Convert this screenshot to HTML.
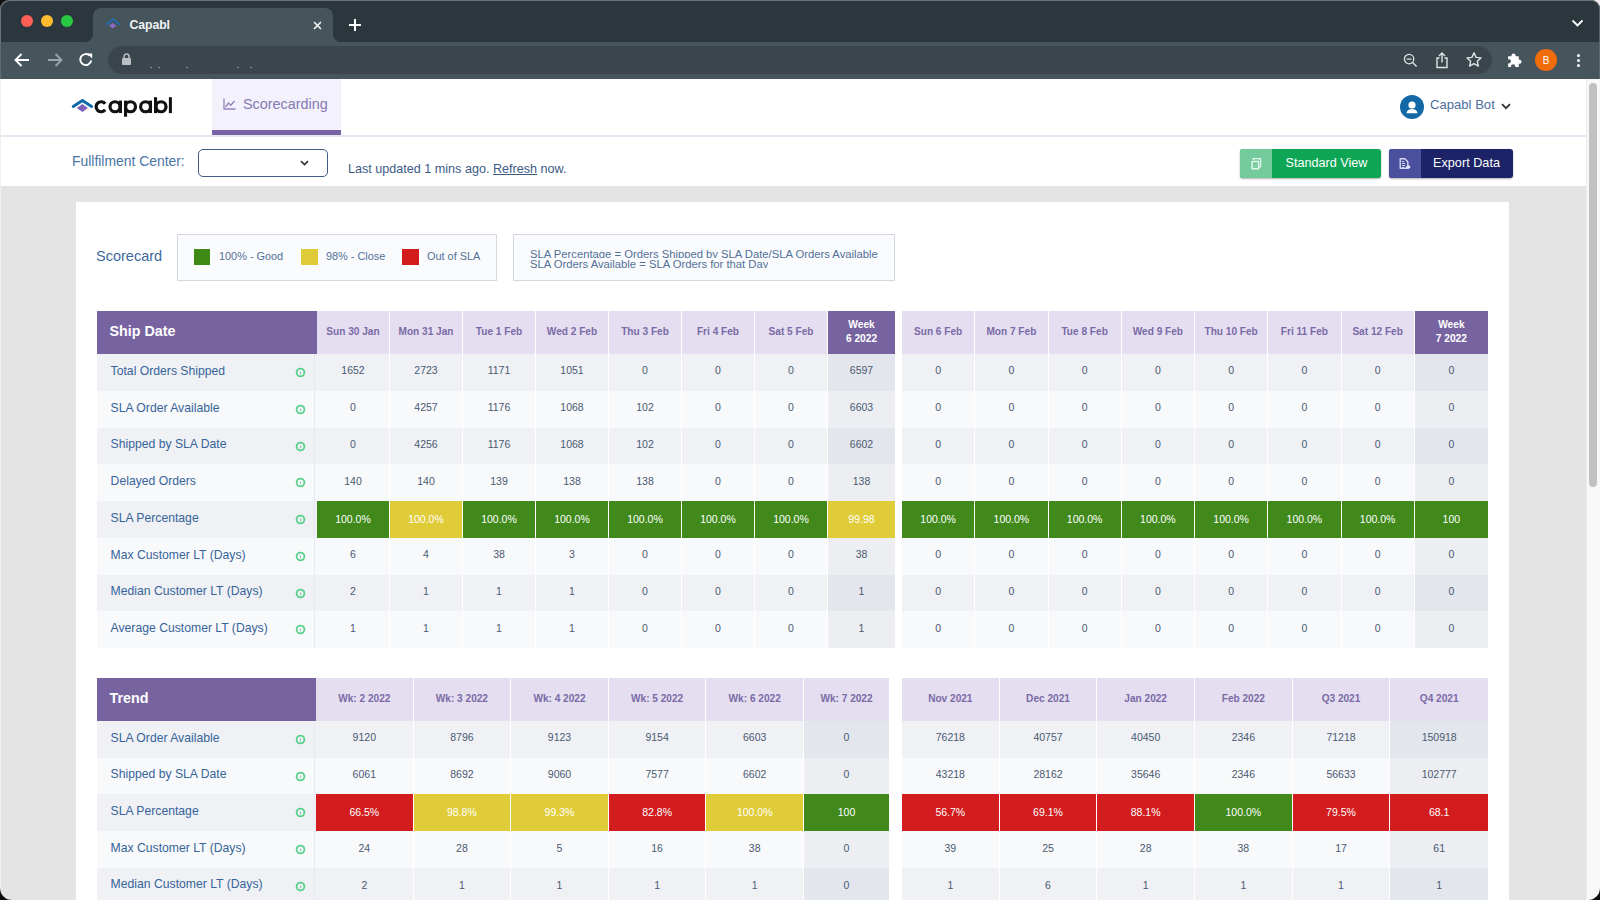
<!DOCTYPE html>
<html><head><meta charset="utf-8"><title>Capabl</title><style>
*{box-sizing:border-box;margin:0;padding:0}
html,body{width:1600px;height:900px;overflow:hidden;background:#fff;font-family:"Liberation Sans",sans-serif}
.a{position:absolute}
.t{position:absolute;white-space:nowrap;line-height:1}
</style></head>
<body>
<div class="a" style="left:0px;top:0px;width:1600px;height:79px;background:#111"></div><div class="a" style="left:1580px;top:0px;width:20px;height:20px;background:#eeeaee"></div><div class="a" style="left:0px;top:0px;width:1600px;height:42px;background:#2b373c;border-radius:9px 9px 0 0;box-shadow:inset 1px 1px 0 #67747a, inset -1px 0 0 #56636a"></div><div class="a" style="left:0px;top:42px;width:1600px;height:37px;background:#46555c;box-shadow:inset 1px 0 0 #5d6a70, inset -1px 0 0 #5d6a70"></div><div class="a" style="left:20.8px;top:14.8px;width:12.4px;height:12.4px;border-radius:50%;background:#fe5f57"></div><div class="a" style="left:40.8px;top:14.8px;width:12.4px;height:12.4px;border-radius:50%;background:#febc2e"></div><div class="a" style="left:60.8px;top:14.8px;width:12.4px;height:12.4px;border-radius:50%;background:#28c840"></div><div class="a" style="left:93px;top:8px;width:240px;height:34px;background:#46555c;border-radius:8px 8px 0 0"></div><div class="a" style="left:85px;top:34px;width:8px;height:8px;background:#46555c"></div><div class="a" style="left:77px;top:26px;width:16px;height:16px;background:#2b373c;border-bottom-right-radius:8px"></div><div class="a" style="left:333px;top:34px;width:8px;height:8px;background:#46555c"></div><div class="a" style="left:333px;top:26px;width:16px;height:16px;background:#2b373c;border-bottom-left-radius:8px"></div><svg class="a" style="left:104px;top:16px" width="18" height="14" viewBox="104 16 18 14"><path d="M106.8 24.2L113 19.2L119.2 24.2" stroke="#1f6db0" stroke-width="2" fill="none" stroke-linecap="round" stroke-linejoin="round"/><path d="M109 25.8L112.7 23L116.4 25.8L112.7 28.6Z" fill="#8a6cc4"/></svg><div class="t" style="left:129.5px;top:18.5px;font-size:12.3px;color:#f1f3f4;font-weight:700;letter-spacing:-0.1px;">Capabl</div><svg class="a" style="left:312.5px;top:20.5px" width="9" height="9" viewBox="0 0 9 9"><path d="M1 1L8 8M8 1L1 8" stroke="#f1f3f4" stroke-width="1.6"/></svg><svg class="a" style="left:348px;top:18px" width="14" height="14" viewBox="0 0 14 14"><path d="M7 1V13M1 7H13" stroke="#fff" stroke-width="2"/></svg><svg class="a" style="left:1571px;top:19px" width="13" height="9" viewBox="0 0 13 9"><path d="M1.5 1.5L6.5 6.5L11.5 1.5" stroke="#fff" stroke-width="1.8" fill="none"/></svg><svg class="a" style="left:13px;top:52px" width="18" height="16" viewBox="0 0 18 16"><path d="M16 8H3M8.5 2L2.5 8L8.5 14" stroke="#fff" stroke-width="1.9" fill="none"/></svg><svg class="a" style="left:46px;top:52px" width="18" height="16" viewBox="0 0 18 16"><path d="M2 8H15M9.5 2L15.5 8L9.5 14" stroke="#9aa4aa" stroke-width="1.9" fill="none"/></svg><svg class="a" style="left:78px;top:52px" width="16" height="16" viewBox="0 0 16 16"><path d="M13.2 8.5A5.5 5.5 0 1 1 11.6 3.6" stroke="#fff" stroke-width="1.9" fill="none"/><path d="M9.2 1.6H14.2V6.6Z" fill="#fff"/></svg><div class="a" style="left:108px;top:46px;width:1384px;height:28px;background:#3a464c;border-radius:14px"></div><svg class="a" style="left:122px;top:53px" width="9" height="12" viewBox="0 0 9 12"><rect x="0" y="5" width="9" height="7" rx="1" fill="#b9bfc4"/><path d="M2 5.5V3.5A2.5 2.5 0 0 1 7 3.5V5.5" stroke="#b9bfc4" stroke-width="1.5" fill="none"/></svg><div class="a" style="left:150px;top:67px;width:2px;height:1px;background:#8a949a"></div><div class="a" style="left:158px;top:67px;width:2px;height:1px;background:#8a949a"></div><div class="a" style="left:186px;top:67px;width:2px;height:1px;background:#8a949a"></div><div class="a" style="left:237px;top:67px;width:2px;height:1px;background:#8a949a"></div><div class="a" style="left:250px;top:67px;width:2px;height:1px;background:#8a949a"></div><svg class="a" style="left:1402.5px;top:53px" width="15" height="15" viewBox="0 0 16 16"><circle cx="6.5" cy="6.5" r="5" stroke="#dfe3e6" stroke-width="1.4" fill="none"/><path d="M4 6.5H9M10.2 10.2L14.5 14.5" stroke="#dfe3e6" stroke-width="1.5"/></svg><svg class="a" style="left:1435px;top:51px" width="14" height="18" viewBox="0 0 14 18"><path d="M4.5 7H2V16.5H12V7H9.5" stroke="#dfe3e6" stroke-width="1.4" fill="none"/><path d="M7 11.5V2M4 5L7 2L10 5" stroke="#dfe3e6" stroke-width="1.4" fill="none"/></svg><svg class="a" style="left:1465px;top:51px" width="18" height="18" viewBox="0 0 18 18"><path d="M9 1.8L11.1 6.4L16 6.9L12.3 10.2L13.4 15.1L9 12.6L4.6 15.1L5.7 10.2L2 6.9L6.9 6.4Z" stroke="#dfe3e6" stroke-width="1.4" fill="none" stroke-linejoin="round"/></svg><svg class="a" style="left:1505.5px;top:51px" width="17" height="17" viewBox="0 0 16 16"><path d="M2 5H5.2A2 2 0 1 1 9 5H12V8.2A2 2 0 1 1 12 12V15H8.6A2 2 0 1 0 4.8 15H2V11.6A2 2 0 1 0 2 7.8Z" fill="#fff"/></svg><div class="a" style="left:1535px;top:49px;width:22px;height:22px;border-radius:50%;background:#f06c0a"></div><div class="a" style="left:1535px;top:50px;width:22px;height:22px;line-height:22px;text-align:center;font-size:10px;color:#fff">B</div><div class="a" style="left:1576.6px;top:54.0px;width:3.2px;height:3.2px;border-radius:50%;background:#fff"></div><div class="a" style="left:1576.6px;top:58.8px;width:3.2px;height:3.2px;border-radius:50%;background:#fff"></div><div class="a" style="left:1576.6px;top:63.699999999999996px;width:3.2px;height:3.2px;border-radius:50%;background:#fff"></div><div class="a" style="left:0px;top:79px;width:1586px;height:107px;background:#fff"></div><svg class="a" style="left:66px;top:92px" width="110" height="28" viewBox="66 92 110 28"><path d="M73.25 106.5L82.4 100.6L91.6 106.5" stroke="#0f69a8" stroke-width="3" fill="none" stroke-linecap="round" stroke-linejoin="round"/><path d="M76.8 108L82.4 104L87.9 108L82.4 111.9Z" fill="#7d63b8"/><g stroke="#111" stroke-width="3.2" fill="none"><path d="M105.15 103.81A5 5 0 1 0 105.15 109.69"/><circle cx="115.0" cy="106.75" r="5"/><circle cx="130.5" cy="106.75" r="5"/><circle cx="145.6" cy="106.75" r="5"/><circle cx="161.0" cy="106.75" r="5"/></g><g fill="#111"><rect x="118.9" y="100.6" width="3.1" height="12.4"/><rect x="124.0" y="100.6" width="3.1" height="16.1"/><rect x="148.9" y="100.6" width="3.1" height="12.4"/><rect x="154.0" y="97.2" width="3.1" height="15.9"/><rect x="168.9" y="97.2" width="3.0" height="15.9"/></g></svg><div class="a" style="left:212px;top:79px;width:129px;height:56px;background:#f3f1fb"></div><div class="a" style="left:212px;top:130px;width:129px;height:5px;background:#7763a4"></div><svg class="a" style="left:223px;top:98px" width="13" height="12" viewBox="0 0 13 12"><path d="M1 0.5V11H12.5" stroke="#9283bd" stroke-width="1.3" fill="none"/><path d="M2.5 9L5.5 5L7.8 7.2L11.5 3" stroke="#9283bd" stroke-width="1.3" fill="none"/></svg><div class="t" style="left:243px;top:97px;font-size:14.4px;color:#8678b3;font-weight:400;">Scorecarding</div><div class="a" style="left:0px;top:135px;width:1586px;height:2px;background:#e7e5f1"></div><div class="a" style="left:1400px;top:95px;width:24px;height:24px;border-radius:50%;background:#1368a5"></div><svg class="a" style="left:1400px;top:95px" width="24" height="24" viewBox="0 0 24 24"><circle cx="12" cy="10" r="3.6" fill="#fff"/><path d="M6.5 18.2C7 15.2 9 14 12 14C15 14 17 15.2 17.5 18.2Z" fill="#fff"/></svg><div class="t" style="left:1430px;top:98px;font-size:13.1px;color:#4d6c9b;font-weight:400;">Capabl Bot</div><svg class="a" style="left:1501px;top:103px" width="10" height="7" viewBox="0 0 10 7"><path d="M1 1.2L5 5.2L9 1.2" stroke="#333" stroke-width="1.8" fill="none"/></svg><div class="t" style="left:72px;top:154.5px;font-size:13.9px;color:#4a73a6;font-weight:400;">Fullfilment Center:</div><div class="a" style="left:198px;top:149px;width:130px;height:28px;border:1px solid #3f5b86;border-radius:5px;background:#fff"></div><svg class="a" style="left:299.5px;top:160px" width="9" height="6" viewBox="0 0 9 6"><path d="M1 1.2L4.5 4.6L8 1.2" stroke="#333" stroke-width="1.7" fill="none"/></svg><div class="t" style="left:348px;top:163.3px;font-size:12.6px;color:#3d5a85;font-weight:400;">Last updated 1 mins ago. <span style="text-decoration:underline">Refresh</span> now.</div><div class="a" style="left:1240px;top:149px;width:141px;height:29px;border-radius:3px;background:#0ea655;box-shadow:0 1px 2px rgba(0,0,0,.3);overflow:hidden"></div><div class="a" style="left:1240px;top:149px;width:32px;height:29px;border-radius:3px 0 0 3px;background:#73cb9c"></div><svg class="a" style="left:1248px;top:155px" width="16" height="17" viewBox="1248 155 16 17"><path d="M1252 161.5H1258.5V168.7H1252Z" stroke="#e4f6ec" stroke-width="1.5" fill="none" stroke-linejoin="round"/><path d="M1253.3 160V158.6H1260.6V166.5L1259 167.6" stroke="#e4f6ec" stroke-width="1.4" fill="none" stroke-linejoin="round"/><rect x="1253" y="164.5" width="4.5" height="3.2" fill="#7fcfa5"/></svg><div class="t" style="left:1285.5px;top:156.5px;font-size:12.65px;color:#fff;font-weight:400;">Standard View</div><div class="a" style="left:1389px;top:149px;width:124px;height:29px;border-radius:3px;background:#1c2366;box-shadow:0 1px 2px rgba(0,0,0,.3)"></div><div class="a" style="left:1389px;top:149px;width:32px;height:29px;border-radius:3px 0 0 3px;background:#4b509e"></div><svg class="a" style="left:1396px;top:155px" width="16" height="17" viewBox="1396 155 16 17"><path d="M1400.2 158.7H1404.8L1407.8 161.8V168.3H1400.2Z" stroke="#d3d6f3" stroke-width="1.4" fill="none" stroke-linejoin="round"/><path d="M1402 161.5H1404M1402 163.5H1405M1402 165.5H1405M1402 167.5H1404" stroke="#d3d6f3" stroke-width="1.1"/><path d="M1406 167H1409.6M1408.2 165.4L1409.8 167L1408.2 168.6" stroke="#e6e8f8" stroke-width="1.3" fill="none"/></svg><div class="t" style="left:1433px;top:156.5px;font-size:12.7px;color:#fff;font-weight:400;">Export Data</div><div class="a" style="left:0px;top:186px;width:1586px;height:714px;background:#e4e4e4"></div><div class="a" style="left:1586px;top:79px;width:14px;height:821px;background:#f8f8f8;border-left:1px solid #ececec"></div><div class="a" style="left:1589px;top:83px;width:8px;height:404px;background:#c1c1c1;border-radius:4px"></div><div class="a" style="left:76px;top:202px;width:1433px;height:698px;background:#fff"></div><div class="t" style="left:96px;top:249px;font-size:14.5px;color:#3e6a9d;font-weight:400;">Scorecard</div><div class="a" style="left:177px;top:234px;width:320px;height:47px;border:1px solid #d5d8dd;background:#fafbfc"></div><div class="a" style="left:194px;top:249px;width:16px;height:16px;background:#3f8a14"></div><div class="t" style="left:219px;top:251px;font-size:10.9px;color:#52709a;font-weight:400;">100% - Good</div><div class="a" style="left:301px;top:249px;width:17px;height:16px;background:#dfcb38"></div><div class="t" style="left:326px;top:251px;font-size:10.9px;color:#52709a;font-weight:400;">98% - Close</div><div class="a" style="left:402px;top:249px;width:17px;height:16px;background:#d21c1c"></div><div class="t" style="left:427px;top:251px;font-size:10.9px;color:#52709a;font-weight:400;">Out of SLA</div><div class="a" style="left:513px;top:234px;width:382px;height:47px;border:1px solid #d5d8dd;background:#fafbfc"></div><div class="a" style="left:530px;top:248px;height:10px;overflow:hidden;font-size:11.25px;line-height:12px;color:#52709a;white-space:nowrap">SLA Percentage = Orders Shipped by SLA Date/SLA Orders Available</div><div class="a" style="left:530px;top:258px;height:10px;overflow:hidden;font-size:11.25px;line-height:12px;color:#52709a;white-space:nowrap">SLA Orders Available = SLA Orders for that Day</div><div class="a" style="left:97px;top:311px;width:220px;height:43px;background:#7763a0"></div><div class="t" style="left:109.5px;top:324.0px;font-size:14.3px;color:#fff;font-weight:700;">Ship Date</div><div class="a" style="left:97px;top:354.0px;width:220px;height:36.75px;background:#eff1f5"></div><div class="t" style="left:110.6px;top:364.875px;font-size:12.2px;color:#37649a;font-weight:400;">Total Orders Shipped</div><svg class="a" style="left:295.1px;top:367.175px" width="11" height="11" viewBox="0 0 11 11"><circle cx="5.5" cy="5.5" r="3.9" stroke="#5ad08c" stroke-width="1.8" fill="none"/><path d="M5.5 4.4V7.4" stroke="#6cc598" stroke-width="0.9"/></svg><div class="a" style="left:97px;top:390.75px;width:220px;height:36.75px;background:#f8f9fb"></div><div class="t" style="left:110.6px;top:401.625px;font-size:12.2px;color:#37649a;font-weight:400;">SLA Order Available</div><svg class="a" style="left:295.1px;top:403.925px" width="11" height="11" viewBox="0 0 11 11"><circle cx="5.5" cy="5.5" r="3.9" stroke="#5ad08c" stroke-width="1.8" fill="none"/><path d="M5.5 4.4V7.4" stroke="#6cc598" stroke-width="0.9"/></svg><div class="a" style="left:97px;top:427.5px;width:220px;height:36.75px;background:#eff1f5"></div><div class="t" style="left:110.6px;top:438.375px;font-size:12.2px;color:#37649a;font-weight:400;">Shipped by SLA Date</div><svg class="a" style="left:295.1px;top:440.675px" width="11" height="11" viewBox="0 0 11 11"><circle cx="5.5" cy="5.5" r="3.9" stroke="#5ad08c" stroke-width="1.8" fill="none"/><path d="M5.5 4.4V7.4" stroke="#6cc598" stroke-width="0.9"/></svg><div class="a" style="left:97px;top:464.25px;width:220px;height:36.75px;background:#f8f9fb"></div><div class="t" style="left:110.6px;top:475.125px;font-size:12.2px;color:#37649a;font-weight:400;">Delayed Orders</div><svg class="a" style="left:295.1px;top:477.425px" width="11" height="11" viewBox="0 0 11 11"><circle cx="5.5" cy="5.5" r="3.9" stroke="#5ad08c" stroke-width="1.8" fill="none"/><path d="M5.5 4.4V7.4" stroke="#6cc598" stroke-width="0.9"/></svg><div class="a" style="left:97px;top:501.0px;width:220px;height:36.75px;background:#eff1f5"></div><div class="t" style="left:110.6px;top:511.875px;font-size:12.2px;color:#37649a;font-weight:400;">SLA Percentage</div><svg class="a" style="left:295.1px;top:514.175px" width="11" height="11" viewBox="0 0 11 11"><circle cx="5.5" cy="5.5" r="3.9" stroke="#5ad08c" stroke-width="1.8" fill="none"/><path d="M5.5 4.4V7.4" stroke="#6cc598" stroke-width="0.9"/></svg><div class="a" style="left:97px;top:537.75px;width:220px;height:36.75px;background:#f8f9fb"></div><div class="t" style="left:110.6px;top:548.625px;font-size:12.2px;color:#37649a;font-weight:400;">Max Customer LT (Days)</div><svg class="a" style="left:295.1px;top:550.925px" width="11" height="11" viewBox="0 0 11 11"><circle cx="5.5" cy="5.5" r="3.9" stroke="#5ad08c" stroke-width="1.8" fill="none"/><path d="M5.5 4.4V7.4" stroke="#6cc598" stroke-width="0.9"/></svg><div class="a" style="left:97px;top:574.5px;width:220px;height:36.75px;background:#eff1f5"></div><div class="t" style="left:110.6px;top:585.375px;font-size:12.2px;color:#37649a;font-weight:400;">Median Customer LT (Days)</div><svg class="a" style="left:295.1px;top:587.675px" width="11" height="11" viewBox="0 0 11 11"><circle cx="5.5" cy="5.5" r="3.9" stroke="#5ad08c" stroke-width="1.8" fill="none"/><path d="M5.5 4.4V7.4" stroke="#6cc598" stroke-width="0.9"/></svg><div class="a" style="left:97px;top:611.25px;width:220px;height:36.75px;background:#f8f9fb"></div><div class="t" style="left:110.6px;top:622.125px;font-size:12.2px;color:#37649a;font-weight:400;">Average Customer LT (Days)</div><svg class="a" style="left:295.1px;top:624.425px" width="11" height="11" viewBox="0 0 11 11"><circle cx="5.5" cy="5.5" r="3.9" stroke="#5ad08c" stroke-width="1.8" fill="none"/><path d="M5.5 4.4V7.4" stroke="#6cc598" stroke-width="0.9"/></svg><div class="a" style="left:314px;top:354.0px;width:1px;height:294.0px;background:#e4e9f8"></div><div class="a" style="left:317px;top:311px;width:72px;height:43px;background:#e4def0"></div><div class="a" style="left:317px;top:309.5px;width:72px;height:43px;line-height:43px;text-align:center;font-size:10.1px;font-weight:700;color:#7a6aa6;white-space:nowrap">Sun 30 Jan</div><div class="a" style="left:317px;top:354.0px;width:72px;height:36.75px;background:#eff1f5"></div><div class="a" style="left:317px;top:354.0px;width:72px;height:36.75px;line-height:33.75px;text-align:center;font-size:10.5px;color:#4a5a72;white-space:nowrap">1652</div><div class="a" style="left:317px;top:390.75px;width:72px;height:36.75px;background:#f8f9fb"></div><div class="a" style="left:317px;top:390.89px;width:72px;height:36.75px;line-height:33.75px;text-align:center;font-size:10.5px;color:#4a5a72;white-space:nowrap">0</div><div class="a" style="left:317px;top:427.5px;width:72px;height:36.75px;background:#eff1f5"></div><div class="a" style="left:317px;top:427.78px;width:72px;height:36.75px;line-height:33.75px;text-align:center;font-size:10.5px;color:#4a5a72;white-space:nowrap">0</div><div class="a" style="left:317px;top:464.25px;width:72px;height:36.75px;background:#f8f9fb"></div><div class="a" style="left:317px;top:464.67px;width:72px;height:36.75px;line-height:33.75px;text-align:center;font-size:10.5px;color:#4a5a72;white-space:nowrap">140</div><div class="a" style="left:317px;top:501.0px;width:72px;height:36.75px;background:#40891a"></div><div class="a" style="left:317px;top:501.56px;width:72px;height:36.75px;line-height:34.75px;text-align:center;font-size:10.5px;color:#fff;white-space:nowrap">100.0%</div><div class="a" style="left:317px;top:537.75px;width:72px;height:36.75px;background:#f8f9fb"></div><div class="a" style="left:317px;top:538.45px;width:72px;height:36.75px;line-height:33.75px;text-align:center;font-size:10.5px;color:#4a5a72;white-space:nowrap">6</div><div class="a" style="left:317px;top:574.5px;width:72px;height:36.75px;background:#eff1f5"></div><div class="a" style="left:317px;top:575.34px;width:72px;height:36.75px;line-height:33.75px;text-align:center;font-size:10.5px;color:#4a5a72;white-space:nowrap">2</div><div class="a" style="left:317px;top:611.25px;width:72px;height:36.75px;background:#f8f9fb"></div><div class="a" style="left:317px;top:612.23px;width:72px;height:36.75px;line-height:33.75px;text-align:center;font-size:10.5px;color:#4a5a72;white-space:nowrap">1</div><div class="a" style="left:390px;top:311px;width:72px;height:43px;background:#e4def0"></div><div class="a" style="left:390px;top:309.5px;width:72px;height:43px;line-height:43px;text-align:center;font-size:10.1px;font-weight:700;color:#7a6aa6;white-space:nowrap">Mon 31 Jan</div><div class="a" style="left:390px;top:354.0px;width:72px;height:36.75px;background:#eff1f5"></div><div class="a" style="left:390px;top:354.0px;width:72px;height:36.75px;line-height:33.75px;text-align:center;font-size:10.5px;color:#4a5a72;white-space:nowrap">2723</div><div class="a" style="left:390px;top:390.75px;width:72px;height:36.75px;background:#f8f9fb"></div><div class="a" style="left:390px;top:390.89px;width:72px;height:36.75px;line-height:33.75px;text-align:center;font-size:10.5px;color:#4a5a72;white-space:nowrap">4257</div><div class="a" style="left:390px;top:427.5px;width:72px;height:36.75px;background:#eff1f5"></div><div class="a" style="left:390px;top:427.78px;width:72px;height:36.75px;line-height:33.75px;text-align:center;font-size:10.5px;color:#4a5a72;white-space:nowrap">4256</div><div class="a" style="left:390px;top:464.25px;width:72px;height:36.75px;background:#f8f9fb"></div><div class="a" style="left:390px;top:464.67px;width:72px;height:36.75px;line-height:33.75px;text-align:center;font-size:10.5px;color:#4a5a72;white-space:nowrap">140</div><div class="a" style="left:390px;top:501.0px;width:72px;height:36.75px;background:#dfcc38"></div><div class="a" style="left:390px;top:501.56px;width:72px;height:36.75px;line-height:34.75px;text-align:center;font-size:10.5px;color:#fff;white-space:nowrap">100.0%</div><div class="a" style="left:390px;top:537.75px;width:72px;height:36.75px;background:#f8f9fb"></div><div class="a" style="left:390px;top:538.45px;width:72px;height:36.75px;line-height:33.75px;text-align:center;font-size:10.5px;color:#4a5a72;white-space:nowrap">4</div><div class="a" style="left:390px;top:574.5px;width:72px;height:36.75px;background:#eff1f5"></div><div class="a" style="left:390px;top:575.34px;width:72px;height:36.75px;line-height:33.75px;text-align:center;font-size:10.5px;color:#4a5a72;white-space:nowrap">1</div><div class="a" style="left:390px;top:611.25px;width:72px;height:36.75px;background:#f8f9fb"></div><div class="a" style="left:390px;top:612.23px;width:72px;height:36.75px;line-height:33.75px;text-align:center;font-size:10.5px;color:#4a5a72;white-space:nowrap">1</div><div class="a" style="left:463px;top:311px;width:72px;height:43px;background:#e4def0"></div><div class="a" style="left:463px;top:309.5px;width:72px;height:43px;line-height:43px;text-align:center;font-size:10.1px;font-weight:700;color:#7a6aa6;white-space:nowrap">Tue 1 Feb</div><div class="a" style="left:463px;top:354.0px;width:72px;height:36.75px;background:#eff1f5"></div><div class="a" style="left:463px;top:354.0px;width:72px;height:36.75px;line-height:33.75px;text-align:center;font-size:10.5px;color:#4a5a72;white-space:nowrap">1171</div><div class="a" style="left:463px;top:390.75px;width:72px;height:36.75px;background:#f8f9fb"></div><div class="a" style="left:463px;top:390.89px;width:72px;height:36.75px;line-height:33.75px;text-align:center;font-size:10.5px;color:#4a5a72;white-space:nowrap">1176</div><div class="a" style="left:463px;top:427.5px;width:72px;height:36.75px;background:#eff1f5"></div><div class="a" style="left:463px;top:427.78px;width:72px;height:36.75px;line-height:33.75px;text-align:center;font-size:10.5px;color:#4a5a72;white-space:nowrap">1176</div><div class="a" style="left:463px;top:464.25px;width:72px;height:36.75px;background:#f8f9fb"></div><div class="a" style="left:463px;top:464.67px;width:72px;height:36.75px;line-height:33.75px;text-align:center;font-size:10.5px;color:#4a5a72;white-space:nowrap">139</div><div class="a" style="left:463px;top:501.0px;width:72px;height:36.75px;background:#40891a"></div><div class="a" style="left:463px;top:501.56px;width:72px;height:36.75px;line-height:34.75px;text-align:center;font-size:10.5px;color:#fff;white-space:nowrap">100.0%</div><div class="a" style="left:463px;top:537.75px;width:72px;height:36.75px;background:#f8f9fb"></div><div class="a" style="left:463px;top:538.45px;width:72px;height:36.75px;line-height:33.75px;text-align:center;font-size:10.5px;color:#4a5a72;white-space:nowrap">38</div><div class="a" style="left:463px;top:574.5px;width:72px;height:36.75px;background:#eff1f5"></div><div class="a" style="left:463px;top:575.34px;width:72px;height:36.75px;line-height:33.75px;text-align:center;font-size:10.5px;color:#4a5a72;white-space:nowrap">1</div><div class="a" style="left:463px;top:611.25px;width:72px;height:36.75px;background:#f8f9fb"></div><div class="a" style="left:463px;top:612.23px;width:72px;height:36.75px;line-height:33.75px;text-align:center;font-size:10.5px;color:#4a5a72;white-space:nowrap">1</div><div class="a" style="left:536px;top:311px;width:72px;height:43px;background:#e4def0"></div><div class="a" style="left:536px;top:309.5px;width:72px;height:43px;line-height:43px;text-align:center;font-size:10.1px;font-weight:700;color:#7a6aa6;white-space:nowrap">Wed 2 Feb</div><div class="a" style="left:536px;top:354.0px;width:72px;height:36.75px;background:#eff1f5"></div><div class="a" style="left:536px;top:354.0px;width:72px;height:36.75px;line-height:33.75px;text-align:center;font-size:10.5px;color:#4a5a72;white-space:nowrap">1051</div><div class="a" style="left:536px;top:390.75px;width:72px;height:36.75px;background:#f8f9fb"></div><div class="a" style="left:536px;top:390.89px;width:72px;height:36.75px;line-height:33.75px;text-align:center;font-size:10.5px;color:#4a5a72;white-space:nowrap">1068</div><div class="a" style="left:536px;top:427.5px;width:72px;height:36.75px;background:#eff1f5"></div><div class="a" style="left:536px;top:427.78px;width:72px;height:36.75px;line-height:33.75px;text-align:center;font-size:10.5px;color:#4a5a72;white-space:nowrap">1068</div><div class="a" style="left:536px;top:464.25px;width:72px;height:36.75px;background:#f8f9fb"></div><div class="a" style="left:536px;top:464.67px;width:72px;height:36.75px;line-height:33.75px;text-align:center;font-size:10.5px;color:#4a5a72;white-space:nowrap">138</div><div class="a" style="left:536px;top:501.0px;width:72px;height:36.75px;background:#40891a"></div><div class="a" style="left:536px;top:501.56px;width:72px;height:36.75px;line-height:34.75px;text-align:center;font-size:10.5px;color:#fff;white-space:nowrap">100.0%</div><div class="a" style="left:536px;top:537.75px;width:72px;height:36.75px;background:#f8f9fb"></div><div class="a" style="left:536px;top:538.45px;width:72px;height:36.75px;line-height:33.75px;text-align:center;font-size:10.5px;color:#4a5a72;white-space:nowrap">3</div><div class="a" style="left:536px;top:574.5px;width:72px;height:36.75px;background:#eff1f5"></div><div class="a" style="left:536px;top:575.34px;width:72px;height:36.75px;line-height:33.75px;text-align:center;font-size:10.5px;color:#4a5a72;white-space:nowrap">1</div><div class="a" style="left:536px;top:611.25px;width:72px;height:36.75px;background:#f8f9fb"></div><div class="a" style="left:536px;top:612.23px;width:72px;height:36.75px;line-height:33.75px;text-align:center;font-size:10.5px;color:#4a5a72;white-space:nowrap">1</div><div class="a" style="left:609px;top:311px;width:72px;height:43px;background:#e4def0"></div><div class="a" style="left:609px;top:309.5px;width:72px;height:43px;line-height:43px;text-align:center;font-size:10.1px;font-weight:700;color:#7a6aa6;white-space:nowrap">Thu 3 Feb</div><div class="a" style="left:609px;top:354.0px;width:72px;height:36.75px;background:#eff1f5"></div><div class="a" style="left:609px;top:354.0px;width:72px;height:36.75px;line-height:33.75px;text-align:center;font-size:10.5px;color:#4a5a72;white-space:nowrap">0</div><div class="a" style="left:609px;top:390.75px;width:72px;height:36.75px;background:#f8f9fb"></div><div class="a" style="left:609px;top:390.89px;width:72px;height:36.75px;line-height:33.75px;text-align:center;font-size:10.5px;color:#4a5a72;white-space:nowrap">102</div><div class="a" style="left:609px;top:427.5px;width:72px;height:36.75px;background:#eff1f5"></div><div class="a" style="left:609px;top:427.78px;width:72px;height:36.75px;line-height:33.75px;text-align:center;font-size:10.5px;color:#4a5a72;white-space:nowrap">102</div><div class="a" style="left:609px;top:464.25px;width:72px;height:36.75px;background:#f8f9fb"></div><div class="a" style="left:609px;top:464.67px;width:72px;height:36.75px;line-height:33.75px;text-align:center;font-size:10.5px;color:#4a5a72;white-space:nowrap">138</div><div class="a" style="left:609px;top:501.0px;width:72px;height:36.75px;background:#40891a"></div><div class="a" style="left:609px;top:501.56px;width:72px;height:36.75px;line-height:34.75px;text-align:center;font-size:10.5px;color:#fff;white-space:nowrap">100.0%</div><div class="a" style="left:609px;top:537.75px;width:72px;height:36.75px;background:#f8f9fb"></div><div class="a" style="left:609px;top:538.45px;width:72px;height:36.75px;line-height:33.75px;text-align:center;font-size:10.5px;color:#4a5a72;white-space:nowrap">0</div><div class="a" style="left:609px;top:574.5px;width:72px;height:36.75px;background:#eff1f5"></div><div class="a" style="left:609px;top:575.34px;width:72px;height:36.75px;line-height:33.75px;text-align:center;font-size:10.5px;color:#4a5a72;white-space:nowrap">0</div><div class="a" style="left:609px;top:611.25px;width:72px;height:36.75px;background:#f8f9fb"></div><div class="a" style="left:609px;top:612.23px;width:72px;height:36.75px;line-height:33.75px;text-align:center;font-size:10.5px;color:#4a5a72;white-space:nowrap">0</div><div class="a" style="left:682px;top:311px;width:72px;height:43px;background:#e4def0"></div><div class="a" style="left:682px;top:309.5px;width:72px;height:43px;line-height:43px;text-align:center;font-size:10.1px;font-weight:700;color:#7a6aa6;white-space:nowrap">Fri 4 Feb</div><div class="a" style="left:682px;top:354.0px;width:72px;height:36.75px;background:#eff1f5"></div><div class="a" style="left:682px;top:354.0px;width:72px;height:36.75px;line-height:33.75px;text-align:center;font-size:10.5px;color:#4a5a72;white-space:nowrap">0</div><div class="a" style="left:682px;top:390.75px;width:72px;height:36.75px;background:#f8f9fb"></div><div class="a" style="left:682px;top:390.89px;width:72px;height:36.75px;line-height:33.75px;text-align:center;font-size:10.5px;color:#4a5a72;white-space:nowrap">0</div><div class="a" style="left:682px;top:427.5px;width:72px;height:36.75px;background:#eff1f5"></div><div class="a" style="left:682px;top:427.78px;width:72px;height:36.75px;line-height:33.75px;text-align:center;font-size:10.5px;color:#4a5a72;white-space:nowrap">0</div><div class="a" style="left:682px;top:464.25px;width:72px;height:36.75px;background:#f8f9fb"></div><div class="a" style="left:682px;top:464.67px;width:72px;height:36.75px;line-height:33.75px;text-align:center;font-size:10.5px;color:#4a5a72;white-space:nowrap">0</div><div class="a" style="left:682px;top:501.0px;width:72px;height:36.75px;background:#40891a"></div><div class="a" style="left:682px;top:501.56px;width:72px;height:36.75px;line-height:34.75px;text-align:center;font-size:10.5px;color:#fff;white-space:nowrap">100.0%</div><div class="a" style="left:682px;top:537.75px;width:72px;height:36.75px;background:#f8f9fb"></div><div class="a" style="left:682px;top:538.45px;width:72px;height:36.75px;line-height:33.75px;text-align:center;font-size:10.5px;color:#4a5a72;white-space:nowrap">0</div><div class="a" style="left:682px;top:574.5px;width:72px;height:36.75px;background:#eff1f5"></div><div class="a" style="left:682px;top:575.34px;width:72px;height:36.75px;line-height:33.75px;text-align:center;font-size:10.5px;color:#4a5a72;white-space:nowrap">0</div><div class="a" style="left:682px;top:611.25px;width:72px;height:36.75px;background:#f8f9fb"></div><div class="a" style="left:682px;top:612.23px;width:72px;height:36.75px;line-height:33.75px;text-align:center;font-size:10.5px;color:#4a5a72;white-space:nowrap">0</div><div class="a" style="left:755px;top:311px;width:72px;height:43px;background:#e4def0"></div><div class="a" style="left:755px;top:309.5px;width:72px;height:43px;line-height:43px;text-align:center;font-size:10.1px;font-weight:700;color:#7a6aa6;white-space:nowrap">Sat 5 Feb</div><div class="a" style="left:755px;top:354.0px;width:72px;height:36.75px;background:#eff1f5"></div><div class="a" style="left:755px;top:354.0px;width:72px;height:36.75px;line-height:33.75px;text-align:center;font-size:10.5px;color:#4a5a72;white-space:nowrap">0</div><div class="a" style="left:755px;top:390.75px;width:72px;height:36.75px;background:#f8f9fb"></div><div class="a" style="left:755px;top:390.89px;width:72px;height:36.75px;line-height:33.75px;text-align:center;font-size:10.5px;color:#4a5a72;white-space:nowrap">0</div><div class="a" style="left:755px;top:427.5px;width:72px;height:36.75px;background:#eff1f5"></div><div class="a" style="left:755px;top:427.78px;width:72px;height:36.75px;line-height:33.75px;text-align:center;font-size:10.5px;color:#4a5a72;white-space:nowrap">0</div><div class="a" style="left:755px;top:464.25px;width:72px;height:36.75px;background:#f8f9fb"></div><div class="a" style="left:755px;top:464.67px;width:72px;height:36.75px;line-height:33.75px;text-align:center;font-size:10.5px;color:#4a5a72;white-space:nowrap">0</div><div class="a" style="left:755px;top:501.0px;width:72px;height:36.75px;background:#40891a"></div><div class="a" style="left:755px;top:501.56px;width:72px;height:36.75px;line-height:34.75px;text-align:center;font-size:10.5px;color:#fff;white-space:nowrap">100.0%</div><div class="a" style="left:755px;top:537.75px;width:72px;height:36.75px;background:#f8f9fb"></div><div class="a" style="left:755px;top:538.45px;width:72px;height:36.75px;line-height:33.75px;text-align:center;font-size:10.5px;color:#4a5a72;white-space:nowrap">0</div><div class="a" style="left:755px;top:574.5px;width:72px;height:36.75px;background:#eff1f5"></div><div class="a" style="left:755px;top:575.34px;width:72px;height:36.75px;line-height:33.75px;text-align:center;font-size:10.5px;color:#4a5a72;white-space:nowrap">0</div><div class="a" style="left:755px;top:611.25px;width:72px;height:36.75px;background:#f8f9fb"></div><div class="a" style="left:755px;top:612.23px;width:72px;height:36.75px;line-height:33.75px;text-align:center;font-size:10.5px;color:#4a5a72;white-space:nowrap">0</div><div class="a" style="left:828px;top:311px;width:67px;height:43px;background:#7763a0"></div><div class="a" style="left:828px;top:318.3px;width:67px;text-align:center;font-size:10.2px;line-height:14px;font-weight:700;color:#fff">Week<br>6 2022</div><div class="a" style="left:828px;top:354.0px;width:67px;height:36.75px;background:#e3e6ec"></div><div class="a" style="left:828px;top:354.0px;width:67px;height:36.75px;line-height:33.75px;text-align:center;font-size:10.5px;color:#4a5a72;white-space:nowrap">6597</div><div class="a" style="left:828px;top:390.75px;width:67px;height:36.75px;background:#eceef1"></div><div class="a" style="left:828px;top:390.89px;width:67px;height:36.75px;line-height:33.75px;text-align:center;font-size:10.5px;color:#4a5a72;white-space:nowrap">6603</div><div class="a" style="left:828px;top:427.5px;width:67px;height:36.75px;background:#e3e6ec"></div><div class="a" style="left:828px;top:427.78px;width:67px;height:36.75px;line-height:33.75px;text-align:center;font-size:10.5px;color:#4a5a72;white-space:nowrap">6602</div><div class="a" style="left:828px;top:464.25px;width:67px;height:36.75px;background:#eceef1"></div><div class="a" style="left:828px;top:464.67px;width:67px;height:36.75px;line-height:33.75px;text-align:center;font-size:10.5px;color:#4a5a72;white-space:nowrap">138</div><div class="a" style="left:828px;top:501.0px;width:67px;height:36.75px;background:#dfcc38"></div><div class="a" style="left:828px;top:501.56px;width:67px;height:36.75px;line-height:34.75px;text-align:center;font-size:10.5px;color:#fff;white-space:nowrap">99.98</div><div class="a" style="left:828px;top:537.75px;width:67px;height:36.75px;background:#eceef1"></div><div class="a" style="left:828px;top:538.45px;width:67px;height:36.75px;line-height:33.75px;text-align:center;font-size:10.5px;color:#4a5a72;white-space:nowrap">38</div><div class="a" style="left:828px;top:574.5px;width:67px;height:36.75px;background:#e3e6ec"></div><div class="a" style="left:828px;top:575.34px;width:67px;height:36.75px;line-height:33.75px;text-align:center;font-size:10.5px;color:#4a5a72;white-space:nowrap">1</div><div class="a" style="left:828px;top:611.25px;width:67px;height:36.75px;background:#eceef1"></div><div class="a" style="left:828px;top:612.23px;width:67px;height:36.75px;line-height:33.75px;text-align:center;font-size:10.5px;color:#4a5a72;white-space:nowrap">1</div><div class="a" style="left:902.0px;top:311px;width:72.25px;height:43px;background:#e4def0"></div><div class="a" style="left:902.0px;top:309.5px;width:72.25px;height:43px;line-height:43px;text-align:center;font-size:10.1px;font-weight:700;color:#7a6aa6;white-space:nowrap">Sun 6 Feb</div><div class="a" style="left:902.0px;top:354.0px;width:72.25px;height:36.75px;background:#eff1f5"></div><div class="a" style="left:902.0px;top:354.0px;width:72.25px;height:36.75px;line-height:33.75px;text-align:center;font-size:10.5px;color:#4a5a72;white-space:nowrap">0</div><div class="a" style="left:902.0px;top:390.75px;width:72.25px;height:36.75px;background:#f8f9fb"></div><div class="a" style="left:902.0px;top:390.89px;width:72.25px;height:36.75px;line-height:33.75px;text-align:center;font-size:10.5px;color:#4a5a72;white-space:nowrap">0</div><div class="a" style="left:902.0px;top:427.5px;width:72.25px;height:36.75px;background:#eff1f5"></div><div class="a" style="left:902.0px;top:427.78px;width:72.25px;height:36.75px;line-height:33.75px;text-align:center;font-size:10.5px;color:#4a5a72;white-space:nowrap">0</div><div class="a" style="left:902.0px;top:464.25px;width:72.25px;height:36.75px;background:#f8f9fb"></div><div class="a" style="left:902.0px;top:464.67px;width:72.25px;height:36.75px;line-height:33.75px;text-align:center;font-size:10.5px;color:#4a5a72;white-space:nowrap">0</div><div class="a" style="left:902.0px;top:501.0px;width:72.25px;height:36.75px;background:#40891a"></div><div class="a" style="left:902.0px;top:501.56px;width:72.25px;height:36.75px;line-height:34.75px;text-align:center;font-size:10.5px;color:#fff;white-space:nowrap">100.0%</div><div class="a" style="left:902.0px;top:537.75px;width:72.25px;height:36.75px;background:#f8f9fb"></div><div class="a" style="left:902.0px;top:538.45px;width:72.25px;height:36.75px;line-height:33.75px;text-align:center;font-size:10.5px;color:#4a5a72;white-space:nowrap">0</div><div class="a" style="left:902.0px;top:574.5px;width:72.25px;height:36.75px;background:#eff1f5"></div><div class="a" style="left:902.0px;top:575.34px;width:72.25px;height:36.75px;line-height:33.75px;text-align:center;font-size:10.5px;color:#4a5a72;white-space:nowrap">0</div><div class="a" style="left:902.0px;top:611.25px;width:72.25px;height:36.75px;background:#f8f9fb"></div><div class="a" style="left:902.0px;top:612.23px;width:72.25px;height:36.75px;line-height:33.75px;text-align:center;font-size:10.5px;color:#4a5a72;white-space:nowrap">0</div><div class="a" style="left:975.25px;top:311px;width:72.25px;height:43px;background:#e4def0"></div><div class="a" style="left:975.25px;top:309.5px;width:72.25px;height:43px;line-height:43px;text-align:center;font-size:10.1px;font-weight:700;color:#7a6aa6;white-space:nowrap">Mon 7 Feb</div><div class="a" style="left:975.25px;top:354.0px;width:72.25px;height:36.75px;background:#eff1f5"></div><div class="a" style="left:975.25px;top:354.0px;width:72.25px;height:36.75px;line-height:33.75px;text-align:center;font-size:10.5px;color:#4a5a72;white-space:nowrap">0</div><div class="a" style="left:975.25px;top:390.75px;width:72.25px;height:36.75px;background:#f8f9fb"></div><div class="a" style="left:975.25px;top:390.89px;width:72.25px;height:36.75px;line-height:33.75px;text-align:center;font-size:10.5px;color:#4a5a72;white-space:nowrap">0</div><div class="a" style="left:975.25px;top:427.5px;width:72.25px;height:36.75px;background:#eff1f5"></div><div class="a" style="left:975.25px;top:427.78px;width:72.25px;height:36.75px;line-height:33.75px;text-align:center;font-size:10.5px;color:#4a5a72;white-space:nowrap">0</div><div class="a" style="left:975.25px;top:464.25px;width:72.25px;height:36.75px;background:#f8f9fb"></div><div class="a" style="left:975.25px;top:464.67px;width:72.25px;height:36.75px;line-height:33.75px;text-align:center;font-size:10.5px;color:#4a5a72;white-space:nowrap">0</div><div class="a" style="left:975.25px;top:501.0px;width:72.25px;height:36.75px;background:#40891a"></div><div class="a" style="left:975.25px;top:501.56px;width:72.25px;height:36.75px;line-height:34.75px;text-align:center;font-size:10.5px;color:#fff;white-space:nowrap">100.0%</div><div class="a" style="left:975.25px;top:537.75px;width:72.25px;height:36.75px;background:#f8f9fb"></div><div class="a" style="left:975.25px;top:538.45px;width:72.25px;height:36.75px;line-height:33.75px;text-align:center;font-size:10.5px;color:#4a5a72;white-space:nowrap">0</div><div class="a" style="left:975.25px;top:574.5px;width:72.25px;height:36.75px;background:#eff1f5"></div><div class="a" style="left:975.25px;top:575.34px;width:72.25px;height:36.75px;line-height:33.75px;text-align:center;font-size:10.5px;color:#4a5a72;white-space:nowrap">0</div><div class="a" style="left:975.25px;top:611.25px;width:72.25px;height:36.75px;background:#f8f9fb"></div><div class="a" style="left:975.25px;top:612.23px;width:72.25px;height:36.75px;line-height:33.75px;text-align:center;font-size:10.5px;color:#4a5a72;white-space:nowrap">0</div><div class="a" style="left:1048.5px;top:311px;width:72.25px;height:43px;background:#e4def0"></div><div class="a" style="left:1048.5px;top:309.5px;width:72.25px;height:43px;line-height:43px;text-align:center;font-size:10.1px;font-weight:700;color:#7a6aa6;white-space:nowrap">Tue 8 Feb</div><div class="a" style="left:1048.5px;top:354.0px;width:72.25px;height:36.75px;background:#eff1f5"></div><div class="a" style="left:1048.5px;top:354.0px;width:72.25px;height:36.75px;line-height:33.75px;text-align:center;font-size:10.5px;color:#4a5a72;white-space:nowrap">0</div><div class="a" style="left:1048.5px;top:390.75px;width:72.25px;height:36.75px;background:#f8f9fb"></div><div class="a" style="left:1048.5px;top:390.89px;width:72.25px;height:36.75px;line-height:33.75px;text-align:center;font-size:10.5px;color:#4a5a72;white-space:nowrap">0</div><div class="a" style="left:1048.5px;top:427.5px;width:72.25px;height:36.75px;background:#eff1f5"></div><div class="a" style="left:1048.5px;top:427.78px;width:72.25px;height:36.75px;line-height:33.75px;text-align:center;font-size:10.5px;color:#4a5a72;white-space:nowrap">0</div><div class="a" style="left:1048.5px;top:464.25px;width:72.25px;height:36.75px;background:#f8f9fb"></div><div class="a" style="left:1048.5px;top:464.67px;width:72.25px;height:36.75px;line-height:33.75px;text-align:center;font-size:10.5px;color:#4a5a72;white-space:nowrap">0</div><div class="a" style="left:1048.5px;top:501.0px;width:72.25px;height:36.75px;background:#40891a"></div><div class="a" style="left:1048.5px;top:501.56px;width:72.25px;height:36.75px;line-height:34.75px;text-align:center;font-size:10.5px;color:#fff;white-space:nowrap">100.0%</div><div class="a" style="left:1048.5px;top:537.75px;width:72.25px;height:36.75px;background:#f8f9fb"></div><div class="a" style="left:1048.5px;top:538.45px;width:72.25px;height:36.75px;line-height:33.75px;text-align:center;font-size:10.5px;color:#4a5a72;white-space:nowrap">0</div><div class="a" style="left:1048.5px;top:574.5px;width:72.25px;height:36.75px;background:#eff1f5"></div><div class="a" style="left:1048.5px;top:575.34px;width:72.25px;height:36.75px;line-height:33.75px;text-align:center;font-size:10.5px;color:#4a5a72;white-space:nowrap">0</div><div class="a" style="left:1048.5px;top:611.25px;width:72.25px;height:36.75px;background:#f8f9fb"></div><div class="a" style="left:1048.5px;top:612.23px;width:72.25px;height:36.75px;line-height:33.75px;text-align:center;font-size:10.5px;color:#4a5a72;white-space:nowrap">0</div><div class="a" style="left:1121.75px;top:311px;width:72.25px;height:43px;background:#e4def0"></div><div class="a" style="left:1121.75px;top:309.5px;width:72.25px;height:43px;line-height:43px;text-align:center;font-size:10.1px;font-weight:700;color:#7a6aa6;white-space:nowrap">Wed 9 Feb</div><div class="a" style="left:1121.75px;top:354.0px;width:72.25px;height:36.75px;background:#eff1f5"></div><div class="a" style="left:1121.75px;top:354.0px;width:72.25px;height:36.75px;line-height:33.75px;text-align:center;font-size:10.5px;color:#4a5a72;white-space:nowrap">0</div><div class="a" style="left:1121.75px;top:390.75px;width:72.25px;height:36.75px;background:#f8f9fb"></div><div class="a" style="left:1121.75px;top:390.89px;width:72.25px;height:36.75px;line-height:33.75px;text-align:center;font-size:10.5px;color:#4a5a72;white-space:nowrap">0</div><div class="a" style="left:1121.75px;top:427.5px;width:72.25px;height:36.75px;background:#eff1f5"></div><div class="a" style="left:1121.75px;top:427.78px;width:72.25px;height:36.75px;line-height:33.75px;text-align:center;font-size:10.5px;color:#4a5a72;white-space:nowrap">0</div><div class="a" style="left:1121.75px;top:464.25px;width:72.25px;height:36.75px;background:#f8f9fb"></div><div class="a" style="left:1121.75px;top:464.67px;width:72.25px;height:36.75px;line-height:33.75px;text-align:center;font-size:10.5px;color:#4a5a72;white-space:nowrap">0</div><div class="a" style="left:1121.75px;top:501.0px;width:72.25px;height:36.75px;background:#40891a"></div><div class="a" style="left:1121.75px;top:501.56px;width:72.25px;height:36.75px;line-height:34.75px;text-align:center;font-size:10.5px;color:#fff;white-space:nowrap">100.0%</div><div class="a" style="left:1121.75px;top:537.75px;width:72.25px;height:36.75px;background:#f8f9fb"></div><div class="a" style="left:1121.75px;top:538.45px;width:72.25px;height:36.75px;line-height:33.75px;text-align:center;font-size:10.5px;color:#4a5a72;white-space:nowrap">0</div><div class="a" style="left:1121.75px;top:574.5px;width:72.25px;height:36.75px;background:#eff1f5"></div><div class="a" style="left:1121.75px;top:575.34px;width:72.25px;height:36.75px;line-height:33.75px;text-align:center;font-size:10.5px;color:#4a5a72;white-space:nowrap">0</div><div class="a" style="left:1121.75px;top:611.25px;width:72.25px;height:36.75px;background:#f8f9fb"></div><div class="a" style="left:1121.75px;top:612.23px;width:72.25px;height:36.75px;line-height:33.75px;text-align:center;font-size:10.5px;color:#4a5a72;white-space:nowrap">0</div><div class="a" style="left:1195.0px;top:311px;width:72.25px;height:43px;background:#e4def0"></div><div class="a" style="left:1195.0px;top:309.5px;width:72.25px;height:43px;line-height:43px;text-align:center;font-size:10.1px;font-weight:700;color:#7a6aa6;white-space:nowrap">Thu 10 Feb</div><div class="a" style="left:1195.0px;top:354.0px;width:72.25px;height:36.75px;background:#eff1f5"></div><div class="a" style="left:1195.0px;top:354.0px;width:72.25px;height:36.75px;line-height:33.75px;text-align:center;font-size:10.5px;color:#4a5a72;white-space:nowrap">0</div><div class="a" style="left:1195.0px;top:390.75px;width:72.25px;height:36.75px;background:#f8f9fb"></div><div class="a" style="left:1195.0px;top:390.89px;width:72.25px;height:36.75px;line-height:33.75px;text-align:center;font-size:10.5px;color:#4a5a72;white-space:nowrap">0</div><div class="a" style="left:1195.0px;top:427.5px;width:72.25px;height:36.75px;background:#eff1f5"></div><div class="a" style="left:1195.0px;top:427.78px;width:72.25px;height:36.75px;line-height:33.75px;text-align:center;font-size:10.5px;color:#4a5a72;white-space:nowrap">0</div><div class="a" style="left:1195.0px;top:464.25px;width:72.25px;height:36.75px;background:#f8f9fb"></div><div class="a" style="left:1195.0px;top:464.67px;width:72.25px;height:36.75px;line-height:33.75px;text-align:center;font-size:10.5px;color:#4a5a72;white-space:nowrap">0</div><div class="a" style="left:1195.0px;top:501.0px;width:72.25px;height:36.75px;background:#40891a"></div><div class="a" style="left:1195.0px;top:501.56px;width:72.25px;height:36.75px;line-height:34.75px;text-align:center;font-size:10.5px;color:#fff;white-space:nowrap">100.0%</div><div class="a" style="left:1195.0px;top:537.75px;width:72.25px;height:36.75px;background:#f8f9fb"></div><div class="a" style="left:1195.0px;top:538.45px;width:72.25px;height:36.75px;line-height:33.75px;text-align:center;font-size:10.5px;color:#4a5a72;white-space:nowrap">0</div><div class="a" style="left:1195.0px;top:574.5px;width:72.25px;height:36.75px;background:#eff1f5"></div><div class="a" style="left:1195.0px;top:575.34px;width:72.25px;height:36.75px;line-height:33.75px;text-align:center;font-size:10.5px;color:#4a5a72;white-space:nowrap">0</div><div class="a" style="left:1195.0px;top:611.25px;width:72.25px;height:36.75px;background:#f8f9fb"></div><div class="a" style="left:1195.0px;top:612.23px;width:72.25px;height:36.75px;line-height:33.75px;text-align:center;font-size:10.5px;color:#4a5a72;white-space:nowrap">0</div><div class="a" style="left:1268.25px;top:311px;width:72.25px;height:43px;background:#e4def0"></div><div class="a" style="left:1268.25px;top:309.5px;width:72.25px;height:43px;line-height:43px;text-align:center;font-size:10.1px;font-weight:700;color:#7a6aa6;white-space:nowrap">Fri 11 Feb</div><div class="a" style="left:1268.25px;top:354.0px;width:72.25px;height:36.75px;background:#eff1f5"></div><div class="a" style="left:1268.25px;top:354.0px;width:72.25px;height:36.75px;line-height:33.75px;text-align:center;font-size:10.5px;color:#4a5a72;white-space:nowrap">0</div><div class="a" style="left:1268.25px;top:390.75px;width:72.25px;height:36.75px;background:#f8f9fb"></div><div class="a" style="left:1268.25px;top:390.89px;width:72.25px;height:36.75px;line-height:33.75px;text-align:center;font-size:10.5px;color:#4a5a72;white-space:nowrap">0</div><div class="a" style="left:1268.25px;top:427.5px;width:72.25px;height:36.75px;background:#eff1f5"></div><div class="a" style="left:1268.25px;top:427.78px;width:72.25px;height:36.75px;line-height:33.75px;text-align:center;font-size:10.5px;color:#4a5a72;white-space:nowrap">0</div><div class="a" style="left:1268.25px;top:464.25px;width:72.25px;height:36.75px;background:#f8f9fb"></div><div class="a" style="left:1268.25px;top:464.67px;width:72.25px;height:36.75px;line-height:33.75px;text-align:center;font-size:10.5px;color:#4a5a72;white-space:nowrap">0</div><div class="a" style="left:1268.25px;top:501.0px;width:72.25px;height:36.75px;background:#40891a"></div><div class="a" style="left:1268.25px;top:501.56px;width:72.25px;height:36.75px;line-height:34.75px;text-align:center;font-size:10.5px;color:#fff;white-space:nowrap">100.0%</div><div class="a" style="left:1268.25px;top:537.75px;width:72.25px;height:36.75px;background:#f8f9fb"></div><div class="a" style="left:1268.25px;top:538.45px;width:72.25px;height:36.75px;line-height:33.75px;text-align:center;font-size:10.5px;color:#4a5a72;white-space:nowrap">0</div><div class="a" style="left:1268.25px;top:574.5px;width:72.25px;height:36.75px;background:#eff1f5"></div><div class="a" style="left:1268.25px;top:575.34px;width:72.25px;height:36.75px;line-height:33.75px;text-align:center;font-size:10.5px;color:#4a5a72;white-space:nowrap">0</div><div class="a" style="left:1268.25px;top:611.25px;width:72.25px;height:36.75px;background:#f8f9fb"></div><div class="a" style="left:1268.25px;top:612.23px;width:72.25px;height:36.75px;line-height:33.75px;text-align:center;font-size:10.5px;color:#4a5a72;white-space:nowrap">0</div><div class="a" style="left:1341.5px;top:311px;width:72.25px;height:43px;background:#e4def0"></div><div class="a" style="left:1341.5px;top:309.5px;width:72.25px;height:43px;line-height:43px;text-align:center;font-size:10.1px;font-weight:700;color:#7a6aa6;white-space:nowrap">Sat 12 Feb</div><div class="a" style="left:1341.5px;top:354.0px;width:72.25px;height:36.75px;background:#eff1f5"></div><div class="a" style="left:1341.5px;top:354.0px;width:72.25px;height:36.75px;line-height:33.75px;text-align:center;font-size:10.5px;color:#4a5a72;white-space:nowrap">0</div><div class="a" style="left:1341.5px;top:390.75px;width:72.25px;height:36.75px;background:#f8f9fb"></div><div class="a" style="left:1341.5px;top:390.89px;width:72.25px;height:36.75px;line-height:33.75px;text-align:center;font-size:10.5px;color:#4a5a72;white-space:nowrap">0</div><div class="a" style="left:1341.5px;top:427.5px;width:72.25px;height:36.75px;background:#eff1f5"></div><div class="a" style="left:1341.5px;top:427.78px;width:72.25px;height:36.75px;line-height:33.75px;text-align:center;font-size:10.5px;color:#4a5a72;white-space:nowrap">0</div><div class="a" style="left:1341.5px;top:464.25px;width:72.25px;height:36.75px;background:#f8f9fb"></div><div class="a" style="left:1341.5px;top:464.67px;width:72.25px;height:36.75px;line-height:33.75px;text-align:center;font-size:10.5px;color:#4a5a72;white-space:nowrap">0</div><div class="a" style="left:1341.5px;top:501.0px;width:72.25px;height:36.75px;background:#40891a"></div><div class="a" style="left:1341.5px;top:501.56px;width:72.25px;height:36.75px;line-height:34.75px;text-align:center;font-size:10.5px;color:#fff;white-space:nowrap">100.0%</div><div class="a" style="left:1341.5px;top:537.75px;width:72.25px;height:36.75px;background:#f8f9fb"></div><div class="a" style="left:1341.5px;top:538.45px;width:72.25px;height:36.75px;line-height:33.75px;text-align:center;font-size:10.5px;color:#4a5a72;white-space:nowrap">0</div><div class="a" style="left:1341.5px;top:574.5px;width:72.25px;height:36.75px;background:#eff1f5"></div><div class="a" style="left:1341.5px;top:575.34px;width:72.25px;height:36.75px;line-height:33.75px;text-align:center;font-size:10.5px;color:#4a5a72;white-space:nowrap">0</div><div class="a" style="left:1341.5px;top:611.25px;width:72.25px;height:36.75px;background:#f8f9fb"></div><div class="a" style="left:1341.5px;top:612.23px;width:72.25px;height:36.75px;line-height:33.75px;text-align:center;font-size:10.5px;color:#4a5a72;white-space:nowrap">0</div><div class="a" style="left:1414.75px;top:311px;width:73.25px;height:43px;background:#7763a0"></div><div class="a" style="left:1414.75px;top:318.3px;width:73.25px;text-align:center;font-size:10.2px;line-height:14px;font-weight:700;color:#fff">Week<br>7 2022</div><div class="a" style="left:1414.75px;top:354.0px;width:73.25px;height:36.75px;background:#e3e6ec"></div><div class="a" style="left:1414.75px;top:354.0px;width:73.25px;height:36.75px;line-height:33.75px;text-align:center;font-size:10.5px;color:#4a5a72;white-space:nowrap">0</div><div class="a" style="left:1414.75px;top:390.75px;width:73.25px;height:36.75px;background:#eceef1"></div><div class="a" style="left:1414.75px;top:390.89px;width:73.25px;height:36.75px;line-height:33.75px;text-align:center;font-size:10.5px;color:#4a5a72;white-space:nowrap">0</div><div class="a" style="left:1414.75px;top:427.5px;width:73.25px;height:36.75px;background:#e3e6ec"></div><div class="a" style="left:1414.75px;top:427.78px;width:73.25px;height:36.75px;line-height:33.75px;text-align:center;font-size:10.5px;color:#4a5a72;white-space:nowrap">0</div><div class="a" style="left:1414.75px;top:464.25px;width:73.25px;height:36.75px;background:#eceef1"></div><div class="a" style="left:1414.75px;top:464.67px;width:73.25px;height:36.75px;line-height:33.75px;text-align:center;font-size:10.5px;color:#4a5a72;white-space:nowrap">0</div><div class="a" style="left:1414.75px;top:501.0px;width:73.25px;height:36.75px;background:#40891a"></div><div class="a" style="left:1414.75px;top:501.56px;width:73.25px;height:36.75px;line-height:34.75px;text-align:center;font-size:10.5px;color:#fff;white-space:nowrap">100</div><div class="a" style="left:1414.75px;top:537.75px;width:73.25px;height:36.75px;background:#eceef1"></div><div class="a" style="left:1414.75px;top:538.45px;width:73.25px;height:36.75px;line-height:33.75px;text-align:center;font-size:10.5px;color:#4a5a72;white-space:nowrap">0</div><div class="a" style="left:1414.75px;top:574.5px;width:73.25px;height:36.75px;background:#e3e6ec"></div><div class="a" style="left:1414.75px;top:575.34px;width:73.25px;height:36.75px;line-height:33.75px;text-align:center;font-size:10.5px;color:#4a5a72;white-space:nowrap">0</div><div class="a" style="left:1414.75px;top:611.25px;width:73.25px;height:36.75px;background:#eceef1"></div><div class="a" style="left:1414.75px;top:612.23px;width:73.25px;height:36.75px;line-height:33.75px;text-align:center;font-size:10.5px;color:#4a5a72;white-space:nowrap">0</div><div class="a" style="left:97px;top:678px;width:219px;height:43px;background:#7763a0"></div><div class="t" style="left:109.5px;top:691.0px;font-size:14.3px;color:#fff;font-weight:700;">Trend</div><div class="a" style="left:97px;top:721.0px;width:219px;height:36.64999999999998px;background:#eff1f5"></div><div class="t" style="left:110.6px;top:731.825px;font-size:12.2px;color:#37649a;font-weight:400;">SLA Order Available</div><svg class="a" style="left:295.1px;top:734.125px" width="11" height="11" viewBox="0 0 11 11"><circle cx="5.5" cy="5.5" r="3.9" stroke="#5ad08c" stroke-width="1.8" fill="none"/><path d="M5.5 4.4V7.4" stroke="#6cc598" stroke-width="0.9"/></svg><div class="a" style="left:97px;top:757.65px;width:219px;height:36.64999999999998px;background:#f8f9fb"></div><div class="t" style="left:110.6px;top:768.4749999999999px;font-size:12.2px;color:#37649a;font-weight:400;">Shipped by SLA Date</div><svg class="a" style="left:295.1px;top:770.7749999999999px" width="11" height="11" viewBox="0 0 11 11"><circle cx="5.5" cy="5.5" r="3.9" stroke="#5ad08c" stroke-width="1.8" fill="none"/><path d="M5.5 4.4V7.4" stroke="#6cc598" stroke-width="0.9"/></svg><div class="a" style="left:97px;top:794.3px;width:219px;height:36.65000000000009px;background:#eff1f5"></div><div class="t" style="left:110.6px;top:805.125px;font-size:12.2px;color:#37649a;font-weight:400;">SLA Percentage</div><svg class="a" style="left:295.1px;top:807.425px" width="11" height="11" viewBox="0 0 11 11"><circle cx="5.5" cy="5.5" r="3.9" stroke="#5ad08c" stroke-width="1.8" fill="none"/><path d="M5.5 4.4V7.4" stroke="#6cc598" stroke-width="0.9"/></svg><div class="a" style="left:97px;top:830.95px;width:219px;height:36.64999999999998px;background:#f8f9fb"></div><div class="t" style="left:110.6px;top:841.7750000000001px;font-size:12.2px;color:#37649a;font-weight:400;">Max Customer LT (Days)</div><svg class="a" style="left:295.1px;top:844.075px" width="11" height="11" viewBox="0 0 11 11"><circle cx="5.5" cy="5.5" r="3.9" stroke="#5ad08c" stroke-width="1.8" fill="none"/><path d="M5.5 4.4V7.4" stroke="#6cc598" stroke-width="0.9"/></svg><div class="a" style="left:97px;top:867.6px;width:219px;height:36.64999999999998px;background:#eff1f5"></div><div class="t" style="left:110.6px;top:878.425px;font-size:12.2px;color:#37649a;font-weight:400;">Median Customer LT (Days)</div><svg class="a" style="left:295.1px;top:880.7249999999999px" width="11" height="11" viewBox="0 0 11 11"><circle cx="5.5" cy="5.5" r="3.9" stroke="#5ad08c" stroke-width="1.8" fill="none"/><path d="M5.5 4.4V7.4" stroke="#6cc598" stroke-width="0.9"/></svg><div class="a" style="left:314px;top:721.0px;width:1px;height:183.25px;background:#e4e9f8"></div><div class="a" style="left:316.0px;top:678px;width:96.60000000000002px;height:43px;background:#e4def0"></div><div class="a" style="left:316.0px;top:676.5px;width:96.60000000000002px;height:43px;line-height:43px;text-align:center;font-size:10.1px;font-weight:700;color:#7a6aa6;white-space:nowrap">Wk: 2 2022</div><div class="a" style="left:316.0px;top:721.0px;width:96.60000000000002px;height:36.64999999999998px;background:#eff1f5"></div><div class="a" style="left:316.0px;top:721.3px;width:96.60000000000002px;height:36.64999999999998px;line-height:33.64999999999998px;text-align:center;font-size:10.5px;color:#4a5a72;white-space:nowrap">9120</div><div class="a" style="left:316.0px;top:757.65px;width:96.60000000000002px;height:36.64999999999998px;background:#f8f9fb"></div><div class="a" style="left:316.0px;top:758.1999999999999px;width:96.60000000000002px;height:36.64999999999998px;line-height:33.64999999999998px;text-align:center;font-size:10.5px;color:#4a5a72;white-space:nowrap">6061</div><div class="a" style="left:316.0px;top:794.3px;width:96.60000000000002px;height:36.65000000000009px;background:#d21c1e"></div><div class="a" style="left:316.0px;top:795.0999999999999px;width:96.60000000000002px;height:36.65000000000009px;line-height:34.65000000000009px;text-align:center;font-size:10.5px;color:#fff;white-space:nowrap">66.5%</div><div class="a" style="left:316.0px;top:830.95px;width:96.60000000000002px;height:36.64999999999998px;background:#f8f9fb"></div><div class="a" style="left:316.0px;top:832.0px;width:96.60000000000002px;height:36.64999999999998px;line-height:33.64999999999998px;text-align:center;font-size:10.5px;color:#4a5a72;white-space:nowrap">24</div><div class="a" style="left:316.0px;top:867.6px;width:96.60000000000002px;height:36.64999999999998px;background:#eff1f5"></div><div class="a" style="left:316.0px;top:868.9px;width:96.60000000000002px;height:36.64999999999998px;line-height:33.64999999999998px;text-align:center;font-size:10.5px;color:#4a5a72;white-space:nowrap">2</div><div class="a" style="left:413.6px;top:678px;width:96.59999999999997px;height:43px;background:#e4def0"></div><div class="a" style="left:413.6px;top:676.5px;width:96.59999999999997px;height:43px;line-height:43px;text-align:center;font-size:10.1px;font-weight:700;color:#7a6aa6;white-space:nowrap">Wk: 3 2022</div><div class="a" style="left:413.6px;top:721.0px;width:96.59999999999997px;height:36.64999999999998px;background:#eff1f5"></div><div class="a" style="left:413.6px;top:721.3px;width:96.59999999999997px;height:36.64999999999998px;line-height:33.64999999999998px;text-align:center;font-size:10.5px;color:#4a5a72;white-space:nowrap">8796</div><div class="a" style="left:413.6px;top:757.65px;width:96.59999999999997px;height:36.64999999999998px;background:#f8f9fb"></div><div class="a" style="left:413.6px;top:758.1999999999999px;width:96.59999999999997px;height:36.64999999999998px;line-height:33.64999999999998px;text-align:center;font-size:10.5px;color:#4a5a72;white-space:nowrap">8692</div><div class="a" style="left:413.6px;top:794.3px;width:96.59999999999997px;height:36.65000000000009px;background:#dfcc38"></div><div class="a" style="left:413.6px;top:795.0999999999999px;width:96.59999999999997px;height:36.65000000000009px;line-height:34.65000000000009px;text-align:center;font-size:10.5px;color:#fff;white-space:nowrap">98.8%</div><div class="a" style="left:413.6px;top:830.95px;width:96.59999999999997px;height:36.64999999999998px;background:#f8f9fb"></div><div class="a" style="left:413.6px;top:832.0px;width:96.59999999999997px;height:36.64999999999998px;line-height:33.64999999999998px;text-align:center;font-size:10.5px;color:#4a5a72;white-space:nowrap">28</div><div class="a" style="left:413.6px;top:867.6px;width:96.59999999999997px;height:36.64999999999998px;background:#eff1f5"></div><div class="a" style="left:413.6px;top:868.9px;width:96.59999999999997px;height:36.64999999999998px;line-height:33.64999999999998px;text-align:center;font-size:10.5px;color:#4a5a72;white-space:nowrap">1</div><div class="a" style="left:511.2px;top:678px;width:96.59999999999997px;height:43px;background:#e4def0"></div><div class="a" style="left:511.2px;top:676.5px;width:96.59999999999997px;height:43px;line-height:43px;text-align:center;font-size:10.1px;font-weight:700;color:#7a6aa6;white-space:nowrap">Wk: 4 2022</div><div class="a" style="left:511.2px;top:721.0px;width:96.59999999999997px;height:36.64999999999998px;background:#eff1f5"></div><div class="a" style="left:511.2px;top:721.3px;width:96.59999999999997px;height:36.64999999999998px;line-height:33.64999999999998px;text-align:center;font-size:10.5px;color:#4a5a72;white-space:nowrap">9123</div><div class="a" style="left:511.2px;top:757.65px;width:96.59999999999997px;height:36.64999999999998px;background:#f8f9fb"></div><div class="a" style="left:511.2px;top:758.1999999999999px;width:96.59999999999997px;height:36.64999999999998px;line-height:33.64999999999998px;text-align:center;font-size:10.5px;color:#4a5a72;white-space:nowrap">9060</div><div class="a" style="left:511.2px;top:794.3px;width:96.59999999999997px;height:36.65000000000009px;background:#dfcc38"></div><div class="a" style="left:511.2px;top:795.0999999999999px;width:96.59999999999997px;height:36.65000000000009px;line-height:34.65000000000009px;text-align:center;font-size:10.5px;color:#fff;white-space:nowrap">99.3%</div><div class="a" style="left:511.2px;top:830.95px;width:96.59999999999997px;height:36.64999999999998px;background:#f8f9fb"></div><div class="a" style="left:511.2px;top:832.0px;width:96.59999999999997px;height:36.64999999999998px;line-height:33.64999999999998px;text-align:center;font-size:10.5px;color:#4a5a72;white-space:nowrap">5</div><div class="a" style="left:511.2px;top:867.6px;width:96.59999999999997px;height:36.64999999999998px;background:#eff1f5"></div><div class="a" style="left:511.2px;top:868.9px;width:96.59999999999997px;height:36.64999999999998px;line-height:33.64999999999998px;text-align:center;font-size:10.5px;color:#4a5a72;white-space:nowrap">1</div><div class="a" style="left:608.8px;top:678px;width:96.60000000000002px;height:43px;background:#e4def0"></div><div class="a" style="left:608.8px;top:676.5px;width:96.60000000000002px;height:43px;line-height:43px;text-align:center;font-size:10.1px;font-weight:700;color:#7a6aa6;white-space:nowrap">Wk: 5 2022</div><div class="a" style="left:608.8px;top:721.0px;width:96.60000000000002px;height:36.64999999999998px;background:#eff1f5"></div><div class="a" style="left:608.8px;top:721.3px;width:96.60000000000002px;height:36.64999999999998px;line-height:33.64999999999998px;text-align:center;font-size:10.5px;color:#4a5a72;white-space:nowrap">9154</div><div class="a" style="left:608.8px;top:757.65px;width:96.60000000000002px;height:36.64999999999998px;background:#f8f9fb"></div><div class="a" style="left:608.8px;top:758.1999999999999px;width:96.60000000000002px;height:36.64999999999998px;line-height:33.64999999999998px;text-align:center;font-size:10.5px;color:#4a5a72;white-space:nowrap">7577</div><div class="a" style="left:608.8px;top:794.3px;width:96.60000000000002px;height:36.65000000000009px;background:#d21c1e"></div><div class="a" style="left:608.8px;top:795.0999999999999px;width:96.60000000000002px;height:36.65000000000009px;line-height:34.65000000000009px;text-align:center;font-size:10.5px;color:#fff;white-space:nowrap">82.8%</div><div class="a" style="left:608.8px;top:830.95px;width:96.60000000000002px;height:36.64999999999998px;background:#f8f9fb"></div><div class="a" style="left:608.8px;top:832.0px;width:96.60000000000002px;height:36.64999999999998px;line-height:33.64999999999998px;text-align:center;font-size:10.5px;color:#4a5a72;white-space:nowrap">16</div><div class="a" style="left:608.8px;top:867.6px;width:96.60000000000002px;height:36.64999999999998px;background:#eff1f5"></div><div class="a" style="left:608.8px;top:868.9px;width:96.60000000000002px;height:36.64999999999998px;line-height:33.64999999999998px;text-align:center;font-size:10.5px;color:#4a5a72;white-space:nowrap">1</div><div class="a" style="left:706.4px;top:678px;width:96.60000000000002px;height:43px;background:#e4def0"></div><div class="a" style="left:706.4px;top:676.5px;width:96.60000000000002px;height:43px;line-height:43px;text-align:center;font-size:10.1px;font-weight:700;color:#7a6aa6;white-space:nowrap">Wk: 6 2022</div><div class="a" style="left:706.4px;top:721.0px;width:96.60000000000002px;height:36.64999999999998px;background:#eff1f5"></div><div class="a" style="left:706.4px;top:721.3px;width:96.60000000000002px;height:36.64999999999998px;line-height:33.64999999999998px;text-align:center;font-size:10.5px;color:#4a5a72;white-space:nowrap">6603</div><div class="a" style="left:706.4px;top:757.65px;width:96.60000000000002px;height:36.64999999999998px;background:#f8f9fb"></div><div class="a" style="left:706.4px;top:758.1999999999999px;width:96.60000000000002px;height:36.64999999999998px;line-height:33.64999999999998px;text-align:center;font-size:10.5px;color:#4a5a72;white-space:nowrap">6602</div><div class="a" style="left:706.4px;top:794.3px;width:96.60000000000002px;height:36.65000000000009px;background:#dfcc38"></div><div class="a" style="left:706.4px;top:795.0999999999999px;width:96.60000000000002px;height:36.65000000000009px;line-height:34.65000000000009px;text-align:center;font-size:10.5px;color:#fff;white-space:nowrap">100.0%</div><div class="a" style="left:706.4px;top:830.95px;width:96.60000000000002px;height:36.64999999999998px;background:#f8f9fb"></div><div class="a" style="left:706.4px;top:832.0px;width:96.60000000000002px;height:36.64999999999998px;line-height:33.64999999999998px;text-align:center;font-size:10.5px;color:#4a5a72;white-space:nowrap">38</div><div class="a" style="left:706.4px;top:867.6px;width:96.60000000000002px;height:36.64999999999998px;background:#eff1f5"></div><div class="a" style="left:706.4px;top:868.9px;width:96.60000000000002px;height:36.64999999999998px;line-height:33.64999999999998px;text-align:center;font-size:10.5px;color:#4a5a72;white-space:nowrap">1</div><div class="a" style="left:804.0px;top:678px;width:85.0px;height:43px;background:#e4def0"></div><div class="a" style="left:804.0px;top:676.5px;width:85.0px;height:43px;line-height:43px;text-align:center;font-size:10.1px;font-weight:700;color:#7a6aa6;white-space:nowrap">Wk: 7 2022</div><div class="a" style="left:804.0px;top:721.0px;width:85.0px;height:36.64999999999998px;background:#e3e6ec"></div><div class="a" style="left:804.0px;top:721.3px;width:85.0px;height:36.64999999999998px;line-height:33.64999999999998px;text-align:center;font-size:10.5px;color:#4a5a72;white-space:nowrap">0</div><div class="a" style="left:804.0px;top:757.65px;width:85.0px;height:36.64999999999998px;background:#eceef1"></div><div class="a" style="left:804.0px;top:758.1999999999999px;width:85.0px;height:36.64999999999998px;line-height:33.64999999999998px;text-align:center;font-size:10.5px;color:#4a5a72;white-space:nowrap">0</div><div class="a" style="left:804.0px;top:794.3px;width:85.0px;height:36.65000000000009px;background:#40891a"></div><div class="a" style="left:804.0px;top:795.0999999999999px;width:85.0px;height:36.65000000000009px;line-height:34.65000000000009px;text-align:center;font-size:10.5px;color:#fff;white-space:nowrap">100</div><div class="a" style="left:804.0px;top:830.95px;width:85.0px;height:36.64999999999998px;background:#eceef1"></div><div class="a" style="left:804.0px;top:832.0px;width:85.0px;height:36.64999999999998px;line-height:33.64999999999998px;text-align:center;font-size:10.5px;color:#4a5a72;white-space:nowrap">0</div><div class="a" style="left:804.0px;top:867.6px;width:85.0px;height:36.64999999999998px;background:#e3e6ec"></div><div class="a" style="left:804.0px;top:868.9px;width:85.0px;height:36.64999999999998px;line-height:33.64999999999998px;text-align:center;font-size:10.5px;color:#4a5a72;white-space:nowrap">0</div><div class="a" style="left:902.0px;top:678px;width:96.66999999999996px;height:43px;background:#e4def0"></div><div class="a" style="left:902.0px;top:676.5px;width:96.66999999999996px;height:43px;line-height:43px;text-align:center;font-size:10.1px;font-weight:700;color:#7a6aa6;white-space:nowrap">Nov 2021</div><div class="a" style="left:902.0px;top:721.0px;width:96.66999999999996px;height:36.64999999999998px;background:#eff1f5"></div><div class="a" style="left:902.0px;top:721.3px;width:96.66999999999996px;height:36.64999999999998px;line-height:33.64999999999998px;text-align:center;font-size:10.5px;color:#4a5a72;white-space:nowrap">76218</div><div class="a" style="left:902.0px;top:757.65px;width:96.66999999999996px;height:36.64999999999998px;background:#f8f9fb"></div><div class="a" style="left:902.0px;top:758.1999999999999px;width:96.66999999999996px;height:36.64999999999998px;line-height:33.64999999999998px;text-align:center;font-size:10.5px;color:#4a5a72;white-space:nowrap">43218</div><div class="a" style="left:902.0px;top:794.3px;width:96.66999999999996px;height:36.65000000000009px;background:#d21c1e"></div><div class="a" style="left:902.0px;top:795.0999999999999px;width:96.66999999999996px;height:36.65000000000009px;line-height:34.65000000000009px;text-align:center;font-size:10.5px;color:#fff;white-space:nowrap">56.7%</div><div class="a" style="left:902.0px;top:830.95px;width:96.66999999999996px;height:36.64999999999998px;background:#f8f9fb"></div><div class="a" style="left:902.0px;top:832.0px;width:96.66999999999996px;height:36.64999999999998px;line-height:33.64999999999998px;text-align:center;font-size:10.5px;color:#4a5a72;white-space:nowrap">39</div><div class="a" style="left:902.0px;top:867.6px;width:96.66999999999996px;height:36.64999999999998px;background:#eff1f5"></div><div class="a" style="left:902.0px;top:868.9px;width:96.66999999999996px;height:36.64999999999998px;line-height:33.64999999999998px;text-align:center;font-size:10.5px;color:#4a5a72;white-space:nowrap">1</div><div class="a" style="left:999.67px;top:678px;width:96.66999999999996px;height:43px;background:#e4def0"></div><div class="a" style="left:999.67px;top:676.5px;width:96.66999999999996px;height:43px;line-height:43px;text-align:center;font-size:10.1px;font-weight:700;color:#7a6aa6;white-space:nowrap">Dec 2021</div><div class="a" style="left:999.67px;top:721.0px;width:96.66999999999996px;height:36.64999999999998px;background:#eff1f5"></div><div class="a" style="left:999.67px;top:721.3px;width:96.66999999999996px;height:36.64999999999998px;line-height:33.64999999999998px;text-align:center;font-size:10.5px;color:#4a5a72;white-space:nowrap">40757</div><div class="a" style="left:999.67px;top:757.65px;width:96.66999999999996px;height:36.64999999999998px;background:#f8f9fb"></div><div class="a" style="left:999.67px;top:758.1999999999999px;width:96.66999999999996px;height:36.64999999999998px;line-height:33.64999999999998px;text-align:center;font-size:10.5px;color:#4a5a72;white-space:nowrap">28162</div><div class="a" style="left:999.67px;top:794.3px;width:96.66999999999996px;height:36.65000000000009px;background:#d21c1e"></div><div class="a" style="left:999.67px;top:795.0999999999999px;width:96.66999999999996px;height:36.65000000000009px;line-height:34.65000000000009px;text-align:center;font-size:10.5px;color:#fff;white-space:nowrap">69.1%</div><div class="a" style="left:999.67px;top:830.95px;width:96.66999999999996px;height:36.64999999999998px;background:#f8f9fb"></div><div class="a" style="left:999.67px;top:832.0px;width:96.66999999999996px;height:36.64999999999998px;line-height:33.64999999999998px;text-align:center;font-size:10.5px;color:#4a5a72;white-space:nowrap">25</div><div class="a" style="left:999.67px;top:867.6px;width:96.66999999999996px;height:36.64999999999998px;background:#eff1f5"></div><div class="a" style="left:999.67px;top:868.9px;width:96.66999999999996px;height:36.64999999999998px;line-height:33.64999999999998px;text-align:center;font-size:10.5px;color:#4a5a72;white-space:nowrap">6</div><div class="a" style="left:1097.34px;top:678px;width:96.67000000000007px;height:43px;background:#e4def0"></div><div class="a" style="left:1097.34px;top:676.5px;width:96.67000000000007px;height:43px;line-height:43px;text-align:center;font-size:10.1px;font-weight:700;color:#7a6aa6;white-space:nowrap">Jan 2022</div><div class="a" style="left:1097.34px;top:721.0px;width:96.67000000000007px;height:36.64999999999998px;background:#eff1f5"></div><div class="a" style="left:1097.34px;top:721.3px;width:96.67000000000007px;height:36.64999999999998px;line-height:33.64999999999998px;text-align:center;font-size:10.5px;color:#4a5a72;white-space:nowrap">40450</div><div class="a" style="left:1097.34px;top:757.65px;width:96.67000000000007px;height:36.64999999999998px;background:#f8f9fb"></div><div class="a" style="left:1097.34px;top:758.1999999999999px;width:96.67000000000007px;height:36.64999999999998px;line-height:33.64999999999998px;text-align:center;font-size:10.5px;color:#4a5a72;white-space:nowrap">35646</div><div class="a" style="left:1097.34px;top:794.3px;width:96.67000000000007px;height:36.65000000000009px;background:#d21c1e"></div><div class="a" style="left:1097.34px;top:795.0999999999999px;width:96.67000000000007px;height:36.65000000000009px;line-height:34.65000000000009px;text-align:center;font-size:10.5px;color:#fff;white-space:nowrap">88.1%</div><div class="a" style="left:1097.34px;top:830.95px;width:96.67000000000007px;height:36.64999999999998px;background:#f8f9fb"></div><div class="a" style="left:1097.34px;top:832.0px;width:96.67000000000007px;height:36.64999999999998px;line-height:33.64999999999998px;text-align:center;font-size:10.5px;color:#4a5a72;white-space:nowrap">28</div><div class="a" style="left:1097.34px;top:867.6px;width:96.67000000000007px;height:36.64999999999998px;background:#eff1f5"></div><div class="a" style="left:1097.34px;top:868.9px;width:96.67000000000007px;height:36.64999999999998px;line-height:33.64999999999998px;text-align:center;font-size:10.5px;color:#4a5a72;white-space:nowrap">1</div><div class="a" style="left:1195.01px;top:678px;width:96.67000000000007px;height:43px;background:#e4def0"></div><div class="a" style="left:1195.01px;top:676.5px;width:96.67000000000007px;height:43px;line-height:43px;text-align:center;font-size:10.1px;font-weight:700;color:#7a6aa6;white-space:nowrap">Feb 2022</div><div class="a" style="left:1195.01px;top:721.0px;width:96.67000000000007px;height:36.64999999999998px;background:#eff1f5"></div><div class="a" style="left:1195.01px;top:721.3px;width:96.67000000000007px;height:36.64999999999998px;line-height:33.64999999999998px;text-align:center;font-size:10.5px;color:#4a5a72;white-space:nowrap">2346</div><div class="a" style="left:1195.01px;top:757.65px;width:96.67000000000007px;height:36.64999999999998px;background:#f8f9fb"></div><div class="a" style="left:1195.01px;top:758.1999999999999px;width:96.67000000000007px;height:36.64999999999998px;line-height:33.64999999999998px;text-align:center;font-size:10.5px;color:#4a5a72;white-space:nowrap">2346</div><div class="a" style="left:1195.01px;top:794.3px;width:96.67000000000007px;height:36.65000000000009px;background:#40891a"></div><div class="a" style="left:1195.01px;top:795.0999999999999px;width:96.67000000000007px;height:36.65000000000009px;line-height:34.65000000000009px;text-align:center;font-size:10.5px;color:#fff;white-space:nowrap">100.0%</div><div class="a" style="left:1195.01px;top:830.95px;width:96.67000000000007px;height:36.64999999999998px;background:#f8f9fb"></div><div class="a" style="left:1195.01px;top:832.0px;width:96.67000000000007px;height:36.64999999999998px;line-height:33.64999999999998px;text-align:center;font-size:10.5px;color:#4a5a72;white-space:nowrap">38</div><div class="a" style="left:1195.01px;top:867.6px;width:96.67000000000007px;height:36.64999999999998px;background:#eff1f5"></div><div class="a" style="left:1195.01px;top:868.9px;width:96.67000000000007px;height:36.64999999999998px;line-height:33.64999999999998px;text-align:center;font-size:10.5px;color:#4a5a72;white-space:nowrap">1</div><div class="a" style="left:1292.68px;top:678px;width:96.66999999999985px;height:43px;background:#e4def0"></div><div class="a" style="left:1292.68px;top:676.5px;width:96.66999999999985px;height:43px;line-height:43px;text-align:center;font-size:10.1px;font-weight:700;color:#7a6aa6;white-space:nowrap">Q3 2021</div><div class="a" style="left:1292.68px;top:721.0px;width:96.66999999999985px;height:36.64999999999998px;background:#eff1f5"></div><div class="a" style="left:1292.68px;top:721.3px;width:96.66999999999985px;height:36.64999999999998px;line-height:33.64999999999998px;text-align:center;font-size:10.5px;color:#4a5a72;white-space:nowrap">71218</div><div class="a" style="left:1292.68px;top:757.65px;width:96.66999999999985px;height:36.64999999999998px;background:#f8f9fb"></div><div class="a" style="left:1292.68px;top:758.1999999999999px;width:96.66999999999985px;height:36.64999999999998px;line-height:33.64999999999998px;text-align:center;font-size:10.5px;color:#4a5a72;white-space:nowrap">56633</div><div class="a" style="left:1292.68px;top:794.3px;width:96.66999999999985px;height:36.65000000000009px;background:#d21c1e"></div><div class="a" style="left:1292.68px;top:795.0999999999999px;width:96.66999999999985px;height:36.65000000000009px;line-height:34.65000000000009px;text-align:center;font-size:10.5px;color:#fff;white-space:nowrap">79.5%</div><div class="a" style="left:1292.68px;top:830.95px;width:96.66999999999985px;height:36.64999999999998px;background:#f8f9fb"></div><div class="a" style="left:1292.68px;top:832.0px;width:96.66999999999985px;height:36.64999999999998px;line-height:33.64999999999998px;text-align:center;font-size:10.5px;color:#4a5a72;white-space:nowrap">17</div><div class="a" style="left:1292.68px;top:867.6px;width:96.66999999999985px;height:36.64999999999998px;background:#eff1f5"></div><div class="a" style="left:1292.68px;top:868.9px;width:96.66999999999985px;height:36.64999999999998px;line-height:33.64999999999998px;text-align:center;font-size:10.5px;color:#4a5a72;white-space:nowrap">1</div><div class="a" style="left:1390.35px;top:678px;width:97.65000000000009px;height:43px;background:#e4def0"></div><div class="a" style="left:1390.35px;top:676.5px;width:97.65000000000009px;height:43px;line-height:43px;text-align:center;font-size:10.1px;font-weight:700;color:#7a6aa6;white-space:nowrap">Q4 2021</div><div class="a" style="left:1390.35px;top:721.0px;width:97.65000000000009px;height:36.64999999999998px;background:#e3e6ec"></div><div class="a" style="left:1390.35px;top:721.3px;width:97.65000000000009px;height:36.64999999999998px;line-height:33.64999999999998px;text-align:center;font-size:10.5px;color:#4a5a72;white-space:nowrap">150918</div><div class="a" style="left:1390.35px;top:757.65px;width:97.65000000000009px;height:36.64999999999998px;background:#eceef1"></div><div class="a" style="left:1390.35px;top:758.1999999999999px;width:97.65000000000009px;height:36.64999999999998px;line-height:33.64999999999998px;text-align:center;font-size:10.5px;color:#4a5a72;white-space:nowrap">102777</div><div class="a" style="left:1390.35px;top:794.3px;width:97.65000000000009px;height:36.65000000000009px;background:#d21c1e"></div><div class="a" style="left:1390.35px;top:795.0999999999999px;width:97.65000000000009px;height:36.65000000000009px;line-height:34.65000000000009px;text-align:center;font-size:10.5px;color:#fff;white-space:nowrap">68.1</div><div class="a" style="left:1390.35px;top:830.95px;width:97.65000000000009px;height:36.64999999999998px;background:#eceef1"></div><div class="a" style="left:1390.35px;top:832.0px;width:97.65000000000009px;height:36.64999999999998px;line-height:33.64999999999998px;text-align:center;font-size:10.5px;color:#4a5a72;white-space:nowrap">61</div><div class="a" style="left:1390.35px;top:867.6px;width:97.65000000000009px;height:36.64999999999998px;background:#e3e6ec"></div><div class="a" style="left:1390.35px;top:868.9px;width:97.65000000000009px;height:36.64999999999998px;line-height:33.64999999999998px;text-align:center;font-size:10.5px;color:#4a5a72;white-space:nowrap">1</div><svg class="a" style="left:0;top:888px" width="12" height="12" viewBox="0 0 12 12"><path d="M0 0V12H12A12 12 0 0 1 0 0Z" fill="#0c0c0c"/></svg><svg class="a" style="left:1588px;top:888px" width="12" height="12" viewBox="0 0 12 12"><path d="M12 0V12H0A12 12 0 0 0 12 0Z" fill="#0c0c0c"/></svg><div class="a" style="left:0px;top:79px;width:1px;height:809px;background:#efefef"></div>
</body></html>
